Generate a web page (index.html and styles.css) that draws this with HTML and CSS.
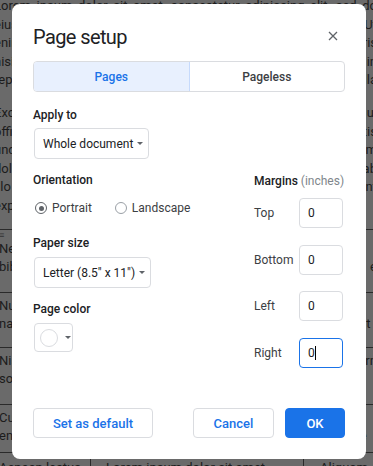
FILE: index.html
```html
<!DOCTYPE html>
<html lang="en">
<head>
    <meta charset="UTF-8">
    <meta name="viewport" content="width=device-width, initial-scale=1.0">
    <title>Page setup</title>
    <link rel="stylesheet" href="styles.css">
</head>
<body>
    <!-- Document behind the dialog (dimmed) -->
    <div class="doc">
        <p class="para-one">Lorem ipsum dolor sit amet, consectetur adipiscing elit, sed do eiusmod tempor incididunt ut labore et dolore magna aliqua. Ut enim ad minim veniam, quis nostrud exercitation ullamco laboris nisi ut aliquip ex ea commodo consequat. Duis aute irure dolor in reprehenderit in voluptate velit esse cillum dolore eu fugiat nulla pariatur quis urna tempus.</p>
        <p class="para-two">Excepteur sint occaecat cupidatat non proident, sunt in culpa qui officia deserunt mollit anim id est laborum. Sed ut perspiciatis unde omnis iste natus error sit voluptatem accusantium doloremque laudantium, totam rem aperiam, eaque ipsa quae ab illo inventore veritatis et quasi architecto beatae vitae dicta sunt explicabo nemo enim ipsam.</p>
        <table class="doc-table">
            <tr class="row-a">
                <td><div class="doc-icon">&#8801;</div><div class="cell">Nec metus bibendum egestas, iaculis massa</div></td>
                <td><div class="doc-icon"></div><div class="cell">Pellentesque habitant morbi tristique senectus et netus</div></td>
                <td><div class="doc-icon"></div><div class="cell">Integer in mauris eu nibh euismod gravida</div></td>
            </tr>
            <tr class="row-b">
                <td><div class="cell">Nulla lectus natoque penatibus</div></td>
                <td><div class="cell">Vestibulum ante ipsum primis in faucibus orci luctus</div></td>
                <td><div class="cell">Ut tincidunt lacus vel sapien interdum</div></td>
            </tr>
            <tr class="row-c">
                <td><div class="cell">Nisl volutpat sociosqu turpis</div></td>
                <td><div class="cell">Curabitur pretium tincidunt lacus nulla gravida orci</div></td>
                <td><div class="cell">Quis urna mauris posuere pede</div></td>
            </tr>
            <tr class="row-d">
                <td><div class="cell">Cupidatat enim id est</div></td>
                <td><div class="cell">Fusce vulputate eleifend sapien vestibulum purus</div></td>
                <td><div class="cell">Nostra posuere elementum</div></td>
            </tr>
            <tr class="row-e">
                <td><div class="cell">Aenean lectus</div></td>
                <td><div class="cell">Lorem ipsum dolor sit amet</div></td>
                <td><div class="cell">Aliquam erat volutpat</div></td>
            </tr>
        </table>
    </div>

    <div class="dialog">
        <div class="dialog-head">
            <h1>Page setup</h1>
            <span class="close">
                <svg width="10" height="10" viewBox="0 0 10 10"><path d="M1 1L9 9M9 1L1 9" stroke="#5f6368" stroke-width="1.3" fill="none"/></svg>
            </span>
        </div>

        <div class="segmented">
            <div class="seg active">Pages</div>
            <div class="seg">Pageless</div>
        </div>

        <div class="label apply-label">Apply to</div>
        <div class="dropdown apply-drop">Whole document <span class="caret"></span></div>

        <div class="columns">
            <div class="col-left">
                <div class="label">Orientation</div>
                <div class="radios">
                    <span class="radio checked"></span><span class="radio-text">Portrait</span>
                    <span class="radio"></span><span class="radio-text">Landscape</span>
                </div>

                <div class="label paper-label">Paper size</div>
                <div class="dropdown paper-drop">Letter (8.5" x 11") <span class="caret"></span></div>

                <div class="label color-label">Page color</div>
                <div class="color-btn"><span class="swatch"></span><span class="caret"></span></div>
            </div>

            <div class="col-right">
                <div class="label margins-label">Margins <span class="unit">(inches)</span></div>
                <div class="margin-list">
                    <div class="margin-row"><span class="margin-name">Top</span><div class="field">0</div></div>
                    <div class="margin-row"><span class="margin-name">Bottom</span><div class="field">0</div></div>
                    <div class="margin-row"><span class="margin-name">Left</span><div class="field">0</div></div>
                    <div class="margin-row"><span class="margin-name">Right</span><div class="field focused">0<span class="text-caret"></span></div></div>
                </div>
            </div>
        </div>

        <div class="dialog-foot">
            <button class="btn default-btn">Set as default</button>
            <div class="spacer"></div>
            <button class="btn cancel-btn">Cancel</button>
            <button class="btn primary">OK</button>
        </div>
    </div>
</body>
</html>
```

FILE: styles.css
```css
:root {
    --blue: #1a73e8;
    --blue-light: #e8f0fe;
    --border: #dadce0;
    --text: #202124;
    --text-soft: #3c4043;
    --icon: #5f6368;
}

* {
    margin: 0;
    padding: 0;
    box-sizing: border-box;
}

body {
    width: 373px;
    height: 466px;
    overflow: hidden;
    position: relative;
    background: #6a6a6a;
    font-family: Roboto, "Liberation Sans", Arial, sans-serif;
    color: var(--text);
}

/* Dimmed document */
.doc {
    height: 469px;
    overflow: hidden;
    color: #1c1c1c;
    font-size: 13px;
    line-height: 18.6px;
    margin-top: -3px;
}

.doc p {
    text-align: justify;
    margin: 0 -4px 0 -6px;
    overflow: hidden;
}

.para-one {
    height: 93px;
    margin-bottom: 14px !important;
}

.para-two {
    height: 112px;
    margin-bottom: 13px !important;
}

.doc-icon {
    height: 9px;
    font-size: 9px;
    line-height: 9px;
    color: #333;
}

.doc-table {
    border-collapse: collapse;
    table-layout: fixed;
    width: 420px;
    margin-left: -30px;
    line-height: 17.5px;
}

.doc-table td {
    border-top: 1px solid #2a2a2a;
    border-left: 1px solid #2a2a2a;
    vertical-align: top;
    padding: 4px 6px 0 30px;
    text-align: justify;
}

.doc-table .cell {
    height: 35px;
    overflow: hidden;
}

.doc-table td:nth-child(1) { width: 120px; padding-left: 28px; }
.doc-table td:nth-child(2) { width: 213px; padding-left: 15px; }
.doc-table td:nth-child(3) { padding-left: 16px; }

.row-a td { height: 63px; padding-top: 1px; }
.row-b td { height: 55px; }
.row-c td { height: 57px; }
.row-d td { height: 48px; }
.row-e td { height: 30px; padding-top: 6px; }

/* Dialog */
.dialog {
    position: absolute;
    left: 12px;
    top: 4px;
    width: 354px;
    height: 455px;
    background: #fff;
    border-radius: 8px;
    padding: 21px;
    display: flex;
    flex-direction: column;
}

.dialog-head {
    display: flex;
    align-items: center;
    justify-content: space-between;
    height: 24px;
}

.dialog-head h1 {
    font-size: 20px;
    line-height: 24px;
    font-weight: 400;
    letter-spacing: -0.6px;
    color: var(--text);
}

.close {
    width: 24px;
    height: 24px;
    display: flex;
    align-items: center;
    justify-content: center;
    margin-top: -3px;
}

.segmented {
    display: flex;
    margin-top: 12px;
    height: 31px;
    border: 1px solid var(--border);
    border-radius: 4px;
    overflow: hidden;
}

.seg {
    flex: 1;
    display: flex;
    align-items: center;
    justify-content: center;
    font-size: 12px;
    font-weight: 500;
    color: var(--text-soft);
}

.seg.active {
    background: var(--blue-light);
    color: var(--blue);
    border-right: 1px solid #c6dafc;
}

.label {
    font-size: 12px;
    line-height: 16px;
    font-weight: 500;
    color: var(--text);
}

.apply-label {
    margin-top: 15px;
}

.dropdown {
    display: inline-flex;
    align-items: center;
    align-self: flex-start;
    height: 31px;
    margin-left: 1px;
    padding: 0 12px 0 8px;
    border: 1px solid var(--border);
    border-radius: 4px;
    font-size: 12px;
    color: var(--text);
    white-space: nowrap;
}

.apply-drop {
    margin-top: 5px;
    width: 115px;
}

.caret {
    display: inline-block;
    margin-left: 4px;
    width: 0;
    height: 0;
    border-left: 3px solid transparent;
    border-right: 3px solid transparent;
    border-top: 3px solid var(--icon);
}

.columns {
    display: grid;
    grid-template-columns: 221px 1fr;
    margin-top: 13px;
}

.col-left {
    display: flex;
    flex-direction: column;
    align-items: flex-start;
}

.radios {
    display: flex;
    align-items: center;
    height: 16px;
    margin-top: 12px;
    font-size: 12px;
    color: var(--text-soft);
}

.radio {
    width: 12px;
    height: 12px;
    border: 1px solid #9aa0a6;
    border-radius: 50%;
    margin-left: 2px;
    display: flex;
    align-items: center;
    justify-content: center;
}

.radio.checked {
    border-color: var(--icon);
}

.radio.checked::after {
    content: "";
    width: 5px;
    height: 5px;
    border-radius: 50%;
    background: var(--icon);
}

.radio-text {
    margin-left: 5px;
    margin-right: 21px;
}

.paper-label {
    margin-top: 19px;
}

.paper-drop {
    margin-top: 6px;
    width: 117px;
}

.color-label {
    margin-top: 13px;
}

.color-btn {
    margin-top: 6px;
    margin-left: 1px;
    width: 39px;
    height: 29px;
    border: 1px solid var(--border);
    border-radius: 4px;
    display: flex;
    align-items: center;
    padding-left: 5px;
}

.swatch {
    width: 18px;
    height: 18px;
    border: 1px solid var(--border);
    border-radius: 50%;
    background: #fff;
}

.color-btn .caret {
    margin-left: 7px;
}

.margins-label {
    margin-top: 1px;
}

.unit {
    font-weight: 400;
    color: #80868b;
}

.margin-list {
    margin-top: 9px;
    display: flex;
    flex-direction: column;
    gap: 16.7px;
}

.margin-row {
    display: flex;
    align-items: center;
}

.margin-name {
    width: 45px;
    font-size: 12px;
    color: var(--text-soft);
}

.field {
    width: 44px;
    height: 30px;
    border: 1px solid var(--border);
    border-radius: 4px;
    display: flex;
    align-items: center;
    padding-left: 8px;
    font-size: 12px;
    color: var(--text);
}

.field.focused {
    border-color: var(--blue);
}

.text-caret {
    width: 1px;
    height: 14px;
    background: #000;
}

.dialog-foot {
    margin-top: auto;
    display: flex;
    align-items: center;
    gap: 11px;
}

.spacer {
    flex: 1;
}

.btn {
    height: 30px;
    border: 1px solid var(--border);
    border-radius: 4px;
    background: #fff;
    color: var(--blue);
    font-family: inherit;
    font-size: 13px;
    font-weight: 500;
}

.default-btn { width: 120px; }
.cancel-btn { width: 81px; }

.btn.primary {
    width: 60px;
    background: var(--blue);
    border-color: var(--blue);
    color: #fff;
}
```
